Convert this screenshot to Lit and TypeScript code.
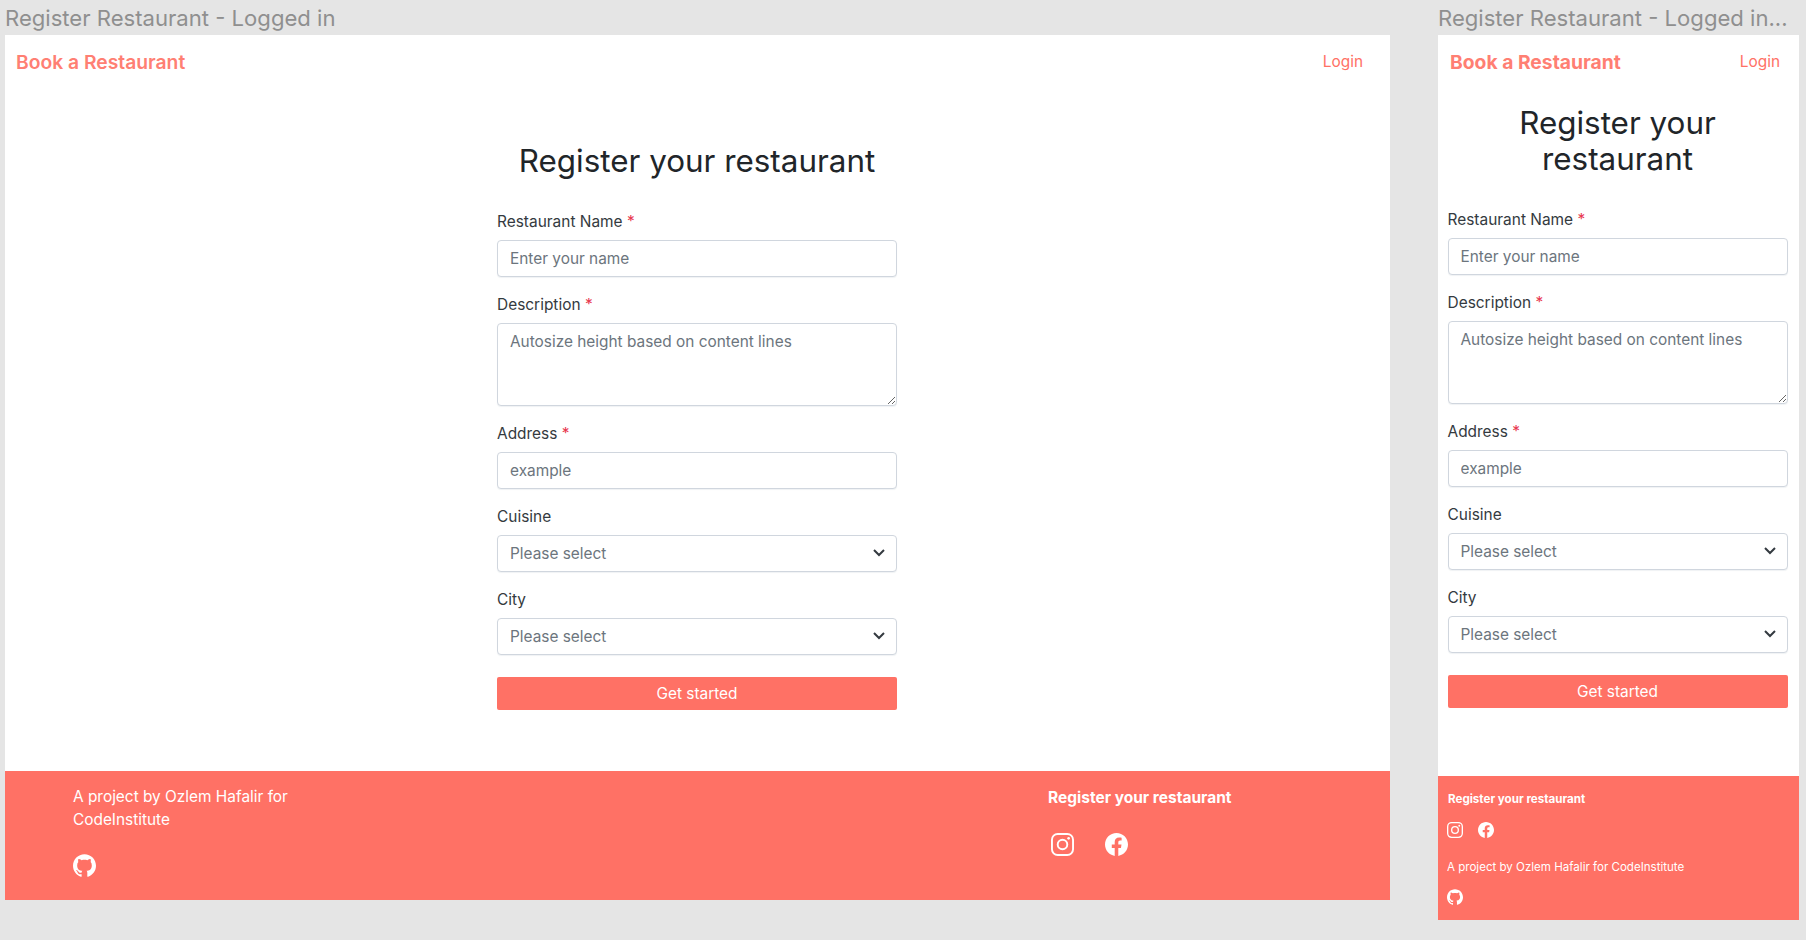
import { LitElement, html, css } from "lit";
import { customElement } from "lit/decorators.js";

const GITHUB = "M12 .297c-6.63 0-12 5.373-12 12 0 5.303 3.438 9.8 8.205 11.385.6.113.82-.258.82-.577 0-.285-.01-1.04-.015-2.04-3.338.724-4.042-1.61-4.042-1.61C4.422 18.07 3.633 17.7 3.633 17.7c-1.087-.744.084-.729.084-.729 1.205.084 1.838 1.236 1.838 1.236 1.07 1.835 2.809 1.305 3.495.998.108-.776.417-1.305.76-1.605-2.665-.3-5.466-1.332-5.466-5.93 0-1.31.465-2.38 1.235-3.22-.135-.303-.54-1.523.105-3.176 0 0 1.005-.322 3.3 1.23.96-.267 1.98-.399 3-.405 1.02.006 2.04.138 3 .405 2.28-1.552 3.285-1.23 3.285-1.23.645 1.653.24 2.873.12 3.176.765.84 1.23 1.91 1.23 3.22 0 4.61-2.805 5.625-5.475 5.92.42.36.81 1.096.81 2.22 0 1.606-.015 2.896-.015 3.286 0 .315.21.69.825.57C20.565 22.092 24 17.592 24 12.297c0-6.627-5.373-12-12-12";
const FACEBOOK = "M24 12.073c0-6.627-5.373-12-12-12s-12 5.373-12 12c0 5.99 4.388 10.954 10.125 11.854v-8.385H7.078v-3.47h3.047V9.43c0-3.007 1.792-4.669 4.533-4.669 1.312 0 2.686.235 2.686.235v2.953H15.83c-1.491 0-1.956.925-1.956 1.874v2.25h3.328l-.532 3.47h-2.796v8.385C19.612 23.027 24 18.062 24 12.073z";

const githubIcon = html`<svg class="ico" viewBox="0 0 24 24" fill="#fff"><path d=${GITHUB}></path></svg>`;
const facebookIcon = html`<svg class="ico" viewBox="0 0 24 24" fill="#fff"><path d=${FACEBOOK}></path></svg>`;
const instagramIcon = html`<svg class="ico" viewBox="0 0 24 24" fill="none" stroke="#fff" stroke-width="2"><rect x="1" y="1" width="22" height="22" rx="6"></rect><circle cx="12" cy="12" r="5"></circle><circle cx="18.4" cy="5.6" r="1.4" fill="#fff" stroke="none"></circle></svg>`;

@customElement("register-form")
class RegisterForm extends LitElement {
  static styles = css`
    :host { display: block; font-family: Inter, "Liberation Sans", sans-serif; }
    .field { display: flex; flex-direction: column; gap: 6px; margin-bottom: 16px; }
    label { display: block; font-size: 15.45px; line-height: 24px; color: #343a40; }
    .req { color: #e8364e; }
    input, textarea, select {
      box-sizing: border-box; display: block; width: 100%; margin: 0; font: inherit; font-size: 15.4px; color: #6c757d;
      background: #fff; border: 1px solid #d0d6de; border-radius: 4px; padding: 0 12px; outline: none;
      box-shadow: 0 1px 1px rgba(206, 212, 218, .3);
    }
    input, select { height: 37px; line-height: 35px; }
    textarea { height: 83px; padding-top: 6px; line-height: 24px; resize: vertical; }
    input::placeholder, textarea::placeholder { color: #6c757d; opacity: 1; }
    select { appearance: none; -webkit-appearance: none; }
    .sel { position: relative; display: block; }
    .chev { position: absolute; right: 11px; top: 12px; width: 14px; height: 12px; pointer-events: none; }
    button {
      display: block; width: 100%; height: 33px; margin: 22px 0 0; border: 0; border-radius: 2px; background: #ff7165; color: #fff;
      font: inherit; font-size: 15.4px; padding: 0;
    }
    .field:last-of-type { margin-bottom: 0; }
  `;
  render() {
    const chev = html`<svg class="chev" viewBox="0 0 14 12" fill="none" stroke="#343a40" stroke-width="2"><path d="M2 3l5 5 5-5"></path></svg>`;
    return html`
      <div class="field"><label>Restaurant Name <span class="req">*</span></label><input placeholder="Enter your name" /></div>
      <div class="field"><label>Description <span class="req">*</span></label><textarea placeholder="Autosize height based on content lines"></textarea></div>
      <div class="field"><label>Address <span class="req">*</span></label><input placeholder="example" /></div>
      <div class="field"><label>Cuisine</label><span class="sel"><select><option>Please select</option></select>${chev}</span></div>
      <div class="field"><label>City</label><span class="sel"><select><option>Please select</option></select>${chev}</span></div>
      <button>Get started</button>
    `;
  }
}

@customElement("app-root")
class AppRoot extends LitElement {
  static styles = css`
    :host { display: block; width: 1806px; height: 940px; background: #e5e5e5; overflow: hidden; font-family: Inter, "Liberation Sans", sans-serif; }
    .canvas { display: flex; gap: 48px; padding-left: 5px; }
    .col { display: flex; flex-direction: column; }
    .col.desk { width: 1385px; }
    .col.mob { width: 361px; }
    .cap { height: 35px; font-size: 22.1px; line-height: 36px; color: #8f8f8f; white-space: nowrap; }
    .frame { background: #fff; display: flex; flex-direction: column; }
    .desk .frame { height: 865px; }
    .mob .frame { height: 885px; }
    nav { display: flex; justify-content: space-between; align-items: center; height: 53px; }
    .desk nav { padding: 0 27px 0 11px; }
    .mob nav { padding: 0 19px 0 12px; }
    .brand { font-size: 19.3px; font-weight: 600; color: #ff7f73; }
    .mob .brand { font-weight: 700; }
    .login { font-size: 15.4px; color: #ff7165; }
    main { flex: 1; }
    .desk main { width: 400px; margin: 0 0 0 492px; padding-top: 55px; }
    .mob main { width: 340px; margin: 0 0 0 9.5px; padding-top: 17px; }
    h1 { margin: 0 0 31px; font-size: 31.4px; line-height: 36px; font-weight: 400; color: #212529; text-align: center; }
    footer { background: #ff7165; color: #fff; }
    .desk footer { height: 129px; display: flex; justify-content: space-between; }
    .mob footer { height: 144px; padding: 16px 10px 0 9px; box-sizing: border-box; }
    .ico { display: block; width: 100%; height: 100%; }
    .about { width: 260px; margin-left: 68px; padding-top: 14px; font-size: 15.4px; line-height: 23px; }
    .icon { display: block; width: 23px; height: 23px; }
    .about .icon { margin-top: 23px; }
    .reg { width: 342px; padding-top: 17px; }
    .reg b { display: block; font-size: 15.5px; line-height: 20px; font-weight: 700; }
    .icons { display: flex; gap: 31px; margin: 25px 0 0 3px; }
    .mob b { display: block; font-size: 11.6px; line-height: 14px; font-weight: 700; margin-left: 1px; }
    .mob .icons { gap: 15px; margin: 16px 0 0; }
    .mob .icon { width: 16px; height: 16px; }
    .mob p { margin: 21px 0 0; font-size: 11.55px; line-height: 16px; }
    .mob .gh { margin-top: 14px; }
  `;
  render() {
    return html`<div class="canvas">
      <section class="col desk">
        <div class="cap">Register Restaurant - Logged in</div>
        <div class="frame">
          <nav><span class="brand">Book a Restaurant</span><span class="login">Login</span></nav>
          <main><h1>Register your restaurant</h1><register-form></register-form></main>
          <footer>
            <div class="about">A project by Ozlem Hafalir for CodeInstitute<span class="icon">${githubIcon}</span></div>
            <div class="reg"><b>Register your restaurant</b><div class="icons"><span class="icon">${instagramIcon}</span><span class="icon">${facebookIcon}</span></div></div>
          </footer>
        </div>
      </section>
      <section class="col mob">
        <div class="cap">Register Restaurant - Logged in...</div>
        <div class="frame">
          <nav><span class="brand">Book a Restaurant</span><span class="login">Login</span></nav>
          <main><h1>Register your restaurant</h1><register-form></register-form></main>
          <footer>
            <b>Register your restaurant</b>
            <div class="icons"><span class="icon">${instagramIcon}</span><span class="icon">${facebookIcon}</span></div>
            <p>A project by Ozlem Hafalir for CodeInstitute</p>
            <span class="icon gh">${githubIcon}</span>
          </footer>
        </div>
      </section>
    </div>`;
  }
}
